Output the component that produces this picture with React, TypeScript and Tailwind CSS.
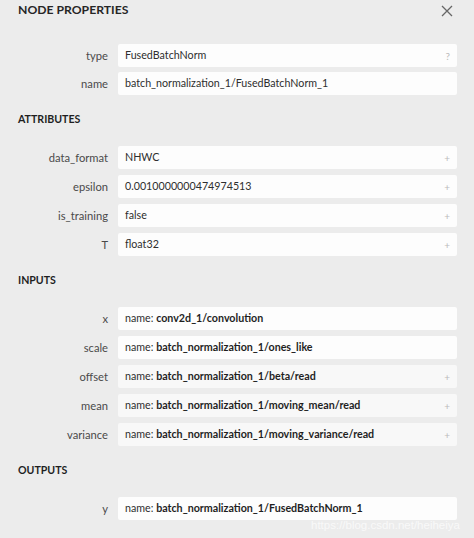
import React from "react";

type Row = { label: string; value: React.ReactNode; icon?: string; bg?: string };

const font = { fontFamily: 'Lato, "Noto Sans", sans-serif' };

function Field({ label, value, icon, bg }: Row) {
  return (
    <div className="flex items-center h-[23px]">
      <div className="w-[108px] text-right text-[11.2px] text-[#4a4a4a] leading-none">{label}</div>
      <div
        className={`ml-[10px] w-[339px] h-[23px] rounded-[2px] flex items-center justify-between pl-[7px] pr-[7px] text-[10.7px] text-[#2e2e2e] ${bg ?? "bg-[#fdfdfd]"}`}
      >
        <span className="whitespace-nowrap leading-none">{value}</span>
        {icon && <span className="text-[10px] text-[#bbb] leading-none">{icon}</span>}
      </div>
    </div>
  );
}

function Section({ title, rows }: { title: string; rows: Row[] }) {
  return (
    <div>
      <div className="mt-[17px] mb-[18px] h-[16px] flex items-center pl-[18px] text-[10.6px] font-bold text-[#1f1f1f]">{title}</div>
      <div className="flex flex-col gap-[6px]">
        {rows.map((r) => (
          <Field key={r.label} {...r} />
        ))}
      </div>
    </div>
  );
}

const nm = (s: string) => (
  <>
    name: <b className="font-bold text-[#1f1f1f]">{s}</b>
  </>
);

export default function App() {
  return (
    <div className="relative w-[474px] h-[538px] bg-[#ececec] overflow-hidden" style={font}>
      <div className="h-[20px] flex items-center justify-between pl-[18px] pr-[21px]">
        <span className="text-[12.2px] font-bold text-[#262626]">NODE PROPERTIES</span>
        <svg width="12" height="12" viewBox="0 0 12 12" className="mt-[1px]">
          <path d="M1 1 L11 11 M11 1 L1 11" stroke="#666" strokeWidth="1.3" />
        </svg>
      </div>
      <div className="mt-[24px] flex flex-col gap-[5px]">
        <Field label="type" value="FusedBatchNorm" icon="?" />
        <Field label="name" value="batch_normalization_1/FusedBatchNorm_1" />
      </div>
      <Section
        title="ATTRIBUTES"
        rows={[
          { label: "data_format", value: "NHWC", icon: "+" },
          { label: "epsilon", value: "0.0010000000474974513", icon: "+" },
          { label: "is_training", value: "false", icon: "+" },
          { label: "T", value: "float32", icon: "+" },
        ]}
      />
      <Section
        title="INPUTS"
        rows={[
          { label: "x", value: nm("conv2d_1/convolution") },
          { label: "scale", value: nm("batch_normalization_1/ones_like") },
          { label: "offset", value: nm("batch_normalization_1/beta/read"), icon: "+", bg: "bg-[#f8f8f8]" },
          { label: "mean", value: nm("batch_normalization_1/moving_mean/read"), icon: "+", bg: "bg-[#f8f8f8]" },
          { label: "variance", value: nm("batch_normalization_1/moving_variance/read"), icon: "+", bg: "bg-[#f8f8f8]" },
        ]}
      />
      <Section title="OUTPUTS" rows={[{ label: "y", value: nm("batch_normalization_1/FusedBatchNorm_1") }]} />
      <div className="absolute left-[311px] top-[518px] text-[11.5px] leading-[14px] text-white/70 whitespace-nowrap" style={{ fontFamily: '"Liberation Sans", sans-serif' }}>
        https://blog.csdn.net/heiheiya
      </div>
    </div>
  );
}
